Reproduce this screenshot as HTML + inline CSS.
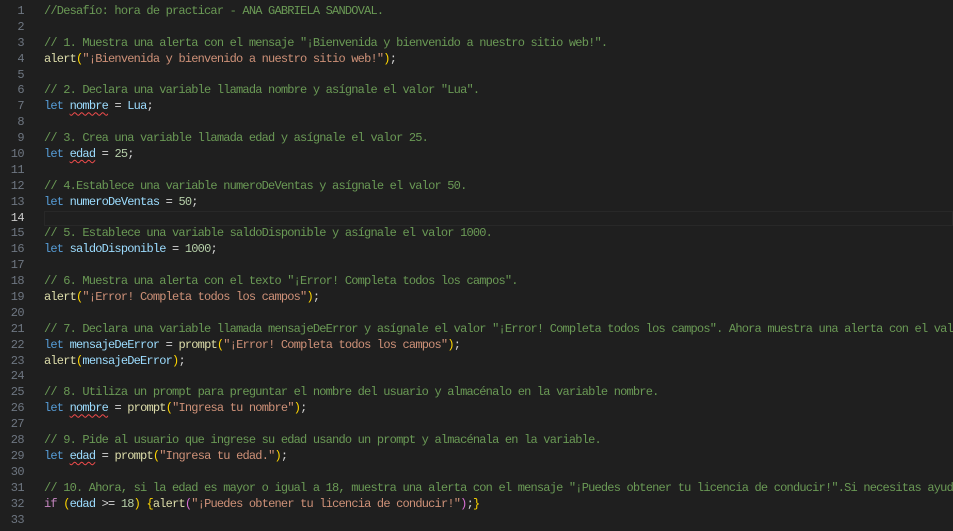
<!DOCTYPE html>
<html><head><meta charset="utf-8"><style>
html,body{margin:0;padding:0;background:#1f1f1f;width:953px;height:531px;overflow:hidden}
#ed{position:absolute;top:4px;left:0;width:953px;font-family:"Liberation Mono",monospace;font-size:12px;letter-spacing:-0.8px;line-height:15.9px}
.l{position:relative;height:15.9px;white-space:pre}
.n{position:absolute;left:0;width:24px;text-align:right;color:#6e7681;letter-spacing:-0.6px}
.t{position:absolute;left:44px;white-space:pre}
.cur{box-sizing:border-box;position:absolute;left:44px;right:0;top:0;height:15.9px;border:1px solid #282828}
.act .n{color:#cccccc}
.c{color:#6a9955}.k{color:#569cd6}.v{color:#9cdcfe}.f{color:#dcdcaa}.s{color:#ce9178}.o{color:#d4d4d4}.num{color:#b5cea8}.p1{color:#ffd700}.p2{color:#da70d6}.kw{color:#c586c0}
.sq{text-decoration:underline wavy #f14c4c;text-decoration-thickness:1px;text-underline-offset:2px}
</style></head><body><div id="ed"><div class="l"><span class="n">1</span><span class="t c">//Desafío: hora de practicar - ANA GABRIELA SANDOVAL.</span></div><div class="l"><span class="n">2</span></div><div class="l"><span class="n">3</span><span class="t c">// 1. Muestra una alerta con el mensaje "¡Bienvenida y bienvenido a nuestro sitio web!".</span></div><div class="l"><span class="n">4</span><span class="t"><span class="f">alert</span><span class="p1">(</span><span class="s">"¡Bienvenida y bienvenido a nuestro sitio web!"</span><span class="p1">)</span><span class="o">;</span></span></div><div class="l"><span class="n">5</span></div><div class="l"><span class="n">6</span><span class="t c">// 2. Declara una variable llamada nombre y asígnale el valor "Lua".</span></div><div class="l"><span class="n">7</span><span class="t"><span class="k">let</span> <span class="v sq">nombre</span><span class="o"> = </span><span class="v">Lua</span><span class="o">;</span></span></div><div class="l"><span class="n">8</span></div><div class="l"><span class="n">9</span><span class="t c">// 3. Crea una variable llamada edad y asígnale el valor 25.</span></div><div class="l"><span class="n">10</span><span class="t"><span class="k">let</span> <span class="v sq">edad</span><span class="o"> = </span><span class="num">25</span><span class="o">;</span></span></div><div class="l"><span class="n">11</span></div><div class="l"><span class="n">12</span><span class="t c">// 4.Establece una variable numeroDeVentas y asígnale el valor 50.</span></div><div class="l"><span class="n">13</span><span class="t"><span class="k">let</span> <span class="v">numeroDeVentas</span><span class="o"> = </span><span class="num">50</span><span class="o">;</span></span></div><div class="l act"><div class="cur"></div><span class="n">14</span></div><div class="l"><span class="n">15</span><span class="t c">// 5. Establece una variable saldoDisponible y asígnale el valor 1000.</span></div><div class="l"><span class="n">16</span><span class="t"><span class="k">let</span> <span class="v">saldoDisponible</span><span class="o"> = </span><span class="num">1000</span><span class="o">;</span></span></div><div class="l"><span class="n">17</span></div><div class="l"><span class="n">18</span><span class="t c">// 6. Muestra una alerta con el texto "¡Error! Completa todos los campos".</span></div><div class="l"><span class="n">19</span><span class="t"><span class="f">alert</span><span class="p1">(</span><span class="s">"¡Error! Completa todos los campos"</span><span class="p1">)</span><span class="o">;</span></span></div><div class="l"><span class="n">20</span></div><div class="l"><span class="n">21</span><span class="t c">// 7. Declara una variable llamada mensajeDeError y asígnale el valor "¡Error! Completa todos los campos". Ahora muestra una alerta con el valor</span></div><div class="l"><span class="n">22</span><span class="t"><span class="k">let</span> <span class="v">mensajeDeError</span><span class="o"> = </span><span class="f">prompt</span><span class="p1">(</span><span class="s">"¡Error! Completa todos los campos"</span><span class="p1">)</span><span class="o">;</span></span></div><div class="l"><span class="n">23</span><span class="t"><span class="f">alert</span><span class="p1">(</span><span class="v">mensajeDeError</span><span class="p1">)</span><span class="o">;</span></span></div><div class="l"><span class="n">24</span></div><div class="l"><span class="n">25</span><span class="t c">// 8. Utiliza un prompt para preguntar el nombre del usuario y almacénalo en la variable nombre.</span></div><div class="l"><span class="n">26</span><span class="t"><span class="k">let</span> <span class="v sq">nombre</span><span class="o"> = </span><span class="f">prompt</span><span class="p1">(</span><span class="s">"Ingresa tu nombre"</span><span class="p1">)</span><span class="o">;</span></span></div><div class="l"><span class="n">27</span></div><div class="l"><span class="n">28</span><span class="t c">// 9. Pide al usuario que ingrese su edad usando un prompt y almacénala en la variable.</span></div><div class="l"><span class="n">29</span><span class="t"><span class="k">let</span> <span class="v sq">edad</span><span class="o"> = </span><span class="f">prompt</span><span class="p1">(</span><span class="s">"Ingresa tu edad."</span><span class="p1">)</span><span class="o">;</span></span></div><div class="l"><span class="n">30</span></div><div class="l"><span class="n">31</span><span class="t c">// 10. Ahora, si la edad es mayor o igual a 18, muestra una alerta con el mensaje "¡Puedes obtener tu licencia de conducir!".Si necesitas ayuda</span></div><div class="l"><span class="n">32</span><span class="t"><span class="kw">if</span> <span class="p1">(</span><span class="v">edad</span><span class="o"> &gt;= </span><span class="num">18</span><span class="p1">)</span> <span class="p1">{</span><span class="f">alert</span><span class="p2">(</span><span class="s">"¡Puedes obtener tu licencia de conducir!"</span><span class="p2">)</span><span class="o">;</span><span class="p1">}</span></span></div><div class="l"><span class="n">33</span></div></div></body></html>
